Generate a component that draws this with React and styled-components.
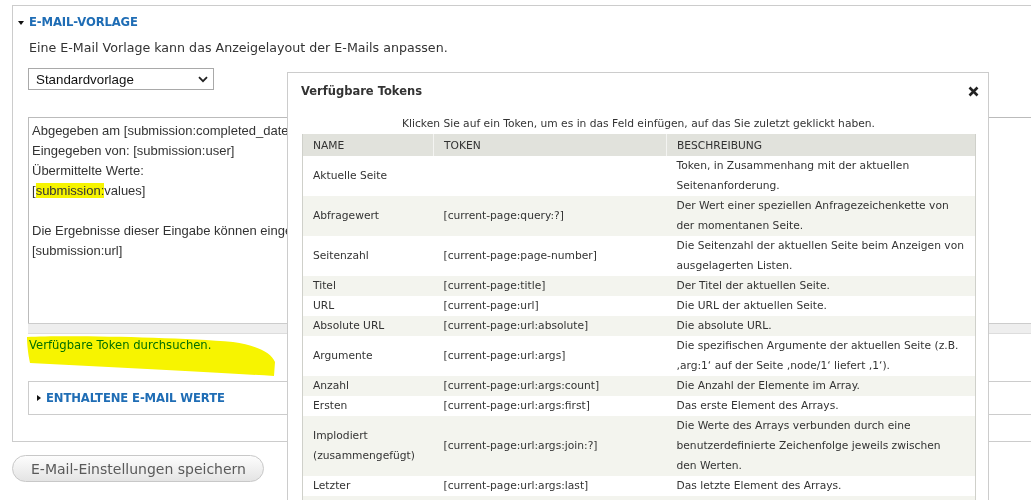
import React from "react";
import styled, { createGlobalStyle } from "styled-components";

const GlobalStyle = createGlobalStyle`
  html, body {
    margin: 0;
    padding: 0;
    background: #fff;
    overflow: hidden;
  }
  body {
    font-family: "DejaVu Sans", Verdana, sans-serif;
    color: #333;
  }
`;

const Page = styled.div`
  position: relative;
  height: 500px;
  padding: 5px 0 0 12px;
  box-sizing: border-box;
`;

const Fieldset = styled.div`
  border: 1px solid #ccc;
  border-right: none;
  padding: 8px 0 26px 15px;
`;

const Legend = styled.div`
  display: flex;
  align-items: center;
  height: 16px;
  margin-left: -10px;
  font-size: 11.6px;
  font-weight: bold;
  text-transform: uppercase;
  letter-spacing: -0.1px;
  color: #1f6db5;
`;

const Arrow = styled.span`
  width: 0;
  height: 0;
  margin-right: 5px;
  border-style: solid;
  border-color: transparent;
  ${(p) =>
    p.$open
      ? `border-width: 4px 3px 0 3px; border-top-color: #111; margin-top: 1px;`
      : `border-width: 3.5px 0 3.5px 4px; border-left-color: #111;`}
`;

const Description = styled.div`
  margin-top: 9px;
  font-size: 12.65px;
  line-height: 18px;
  color: #333;
  padding-left: 1px;
`;

const Select = styled.div`
  display: flex;
  align-items: center;
  justify-content: space-between;
  box-sizing: border-box;
  width: 186px;
  height: 22px;
  margin-top: 11px;
  padding: 0 5px 0 7px;
  border: 1px solid #a9a9a9;
  background: #fff;
  font-family: "Liberation Sans", Arial, sans-serif;
  font-size: 13.33px;
  color: #111;
`;

const TextArea = styled.div`
  box-sizing: border-box;
  height: 206px;
  margin-top: 27px;
  padding: 3px 3px;
  border: 1px solid #bbb;
  border-right: none;
  border-bottom: none;
  font-family: "Liberation Sans", Arial, sans-serif;
  font-size: 13px;
  line-height: 20px;
  color: #333;
  white-space: nowrap;
  overflow: hidden;
`;

const Mark = styled.span`
  background: #f6f400;
`;

const Grippie = styled.div`
  box-sizing: border-box;
  height: 11px;
  background: #eee;
  border-top: 1px solid #ccc;
  border-bottom: 1px solid #ddd;
`;

const LinkRow = styled.div`
  position: relative;
  margin-top: 3px;
  height: 16px;
  line-height: 16px;
  font-size: 11.6px;
  color: #0074bd;
  padding-left: 1px;
`;

const Highlighter = styled.svg`
  position: absolute;
  left: -3px;
  top: -3px;
  mix-blend-mode: multiply;
  pointer-events: none;
`;

const SubFieldset = styled.div`
  box-sizing: border-box;
  height: 34px;
  margin-top: 28px;
  padding-left: 8px;
  border: 1px solid #ccc;
  border-right: none;
  display: flex;
  align-items: center;
`;

const SubLegend = styled(Legend)`
  margin-left: 0;
  height: auto;
`;

const SaveButton = styled.button`
  margin-top: 13px;
  height: 27px;
  padding: 0 17px 0 18px;
  border: 1px solid #c8c8c8;
  border-radius: 14px;
  background: linear-gradient(#fdfdfd, #e4e4e4);
  font-family: "DejaVu Sans", Verdana, sans-serif;
  font-size: 14px;
  color: #5a5a5a;
`;

const Dialog = styled.div`
  position: absolute;
  left: 287px;
  top: 72px;
  width: 700px;
  height: 460px;
  background: #fff;
  border: 1px solid #ccc;
  overflow: hidden;
`;

const TitleBar = styled.div`
  display: flex;
  align-items: center;
  justify-content: space-between;
  height: 16px;
  padding: 10px 9px 0 13px;
`;

const Title = styled.div`
  font-size: 11.5px;
  font-weight: bold;
  color: #333;
`;

const Hint = styled.div`
  margin: 17px 13px 2px 14px;
  height: 16px;
  line-height: 16px;
  text-align: center;
  font-size: 10.7px;
  color: #333;
`;

const Table = styled.table`
  margin-left: 14px;
  width: 673px;
  table-layout: fixed;
  border-collapse: collapse;
  border-left: 1px solid #cfd0ca;
  border-right: 1px solid #cfd0ca;
  font-size: 10.7px;
  color: #333;
`;

const Th = styled.th`
  box-sizing: border-box;
  width: ${(p) => p.$w}px;
  height: 22px;
  padding: 0 10px;
  background: #e1e2dc;
  border-left: 1px solid #f4f4f2;
  font-weight: normal;
  text-align: left;
  text-transform: uppercase;
  &:first-child {
    border-left: none;
  }
`;

const Tr = styled.tr`
  height: 20px;
  background: ${(p) => (p.$odd ? "#f3f4ee" : "#fff")};
`;

const Td = styled.td`
  padding: 0 10px;
  line-height: 20px;
  vertical-align: middle;
  white-space: nowrap;
`;

const tokens = [
  {
    name: ["Aktuelle Seite"],
    token: "",
    desc: ["Token, in Zusammenhang mit der aktuellen", "Seitenanforderung."],
  },
  {
    name: ["Abfragewert"],
    token: "[current-page:query:?]",
    desc: ["Der Wert einer speziellen Anfragezeichenkette von", "der momentanen Seite."],
  },
  {
    name: ["Seitenzahl"],
    token: "[current-page:page-number]",
    desc: ["Die Seitenzahl der aktuellen Seite beim Anzeigen von", "ausgelagerten Listen."],
  },
  { name: ["Titel"], token: "[current-page:title]", desc: ["Der Titel der aktuellen Seite."] },
  { name: ["URL"], token: "[current-page:url]", desc: ["Die URL der aktuellen Seite."] },
  { name: ["Absolute URL"], token: "[current-page:url:absolute]", desc: ["Die absolute URL."] },
  {
    name: ["Argumente"],
    token: "[current-page:url:args]",
    desc: [
      "Die spezifischen Argumente der aktuellen Seite (z.B.",
      "\u201aarg:1\u2018 auf der Seite \u201anode/1\u2018 liefert \u201a1\u2018).",
    ],
  },
  { name: ["Anzahl"], token: "[current-page:url:args:count]", desc: ["Die Anzahl der Elemente im Array."] },
  { name: ["Ersten"], token: "[current-page:url:args:first]", desc: ["Das erste Element des Arrays."] },
  {
    name: ["Implodiert", "(zusammengefügt)"],
    token: "[current-page:url:args:join:?]",
    desc: [
      "Die Werte des Arrays verbunden durch eine",
      "benutzerdefinierte Zeichenfolge jeweils zwischen",
      "den Werten.",
    ],
  },
  { name: ["Letzter"], token: "[current-page:url:args:last]", desc: ["Das letzte Element des Arrays."] },
  // nächste Zeile liegt unterhalb des sichtbaren Bereichs
  { name: [], token: "", desc: [] },
];

// mehrzeilige Zellen mit festen Umbrüchen
const Lines = ({ lines }) =>
  lines.map((line, i) => (
    <React.Fragment key={i}>
      {i > 0 && <br />}
      {line}
    </React.Fragment>
  ));

const App = () => {
  return (
    <>
      <GlobalStyle />
      <Page>
        <Fieldset>
          <Legend>
            <Arrow $open />
            E-Mail-Vorlage
          </Legend>
          <Description>
            Eine E-Mail Vorlage kann das Anzeigelayout der E-Mails anpassen.
          </Description>
          <Select>
            Standardvorlage
            <svg width="10" height="7" viewBox="0 0 10 7">
              <path d="M1 1.2 L5 5.2 L9 1.2" fill="none" stroke="#222" strokeWidth="1.8" />
            </svg>
          </Select>
          <TextArea>
            Abgegeben am [submission:completed_date:long]
            <br />
            Eingegeben von: [submission:user]
            <br />
            Übermittelte Werte:
            <br />[<Mark>submission:</Mark>values]
            <br />
            <br />
            Die Ergebnisse dieser Eingabe können eingesehen werden unter:
            <br />
            [submission:url]
          </TextArea>
          <Grippie />
          <LinkRow>
            Verfügbare Token durchsuchen.
            <Highlighter width="254" height="46" viewBox="0 0 254 46">
              <path
                d="M2 3 C40 1 150 3 208 8 C230 11 246 18 250 28 L249 42 C180 38 90 33 5 29 C3 20 2 10 2 3 Z"
                fill="#f7f400"
              />
            </Highlighter>
          </LinkRow>
          <SubFieldset>
            <SubLegend>
              <Arrow />
              Enthaltene E-Mail Werte
            </SubLegend>
          </SubFieldset>
        </Fieldset>
        <SaveButton>E-Mail-Einstellungen speichern</SaveButton>

        <Dialog>
          <TitleBar>
            <Title>Verfügbare Tokens</Title>
            <svg width="11" height="11" viewBox="0 0 11 11">
              <path d="M1.5 1.5 L9.5 9.5 M9.5 1.5 L1.5 9.5" stroke="#222" strokeWidth="2.6" />
            </svg>
          </TitleBar>
          <Hint>
            Klicken Sie auf ein Token, um es in das Feld einfügen, auf das Sie zuletzt geklickt haben.
          </Hint>
          <Table>
            <thead>
              <tr>
                <Th $w={131}>Name</Th>
                <Th $w={233}>Token</Th>
                <Th $w={309}>Beschreibung</Th>
              </tr>
            </thead>
            <tbody>
              {tokens.map((row, i) => (
                <Tr key={i} $odd={i % 2 === 1}>
                  <Td>
                    <Lines lines={row.name} />
                  </Td>
                  <Td>{row.token}</Td>
                  <Td>
                    <Lines lines={row.desc} />
                  </Td>
                </Tr>
              ))}
            </tbody>
          </Table>
        </Dialog>
      </Page>
    </>
  );
};

export default App;
